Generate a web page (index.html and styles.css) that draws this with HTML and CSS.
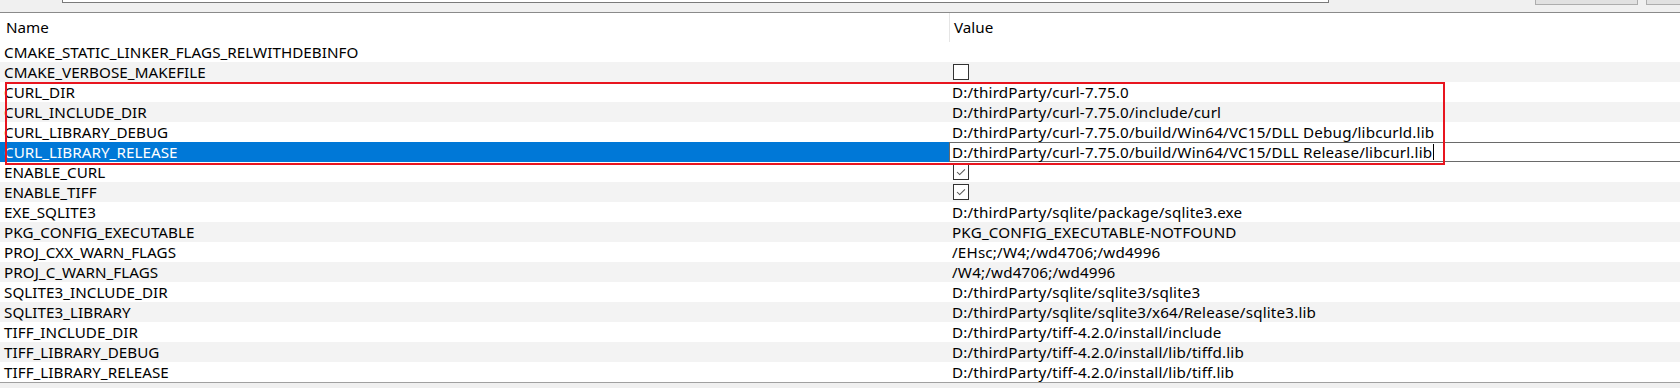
FILE: index.html
```html
<!DOCTYPE html>
<html lang="en">
<head>
  <meta charset="UTF-8" />
  <title>CMake cache</title>
  <link rel="stylesheet" href="styles.css">
</head>
<body>

  <!-- top strip: search box and buttons, mostly cut off -->
  <div class="toolbar">
    <div class="search"></div>
    <div class="tool-btn"></div>
    <div class="tool-btn tool-btn-last"></div>
  </div>

  <div class="cache">
    <div class="cache-head">
      <div class="head-name">Name</div>
      <div class="head-value">Value</div>
    </div>

    <div class="cache-rows">
      <div class="row"><div class="name">CMAKE_STATIC_LINKER_FLAGS_RELWITHDEBINFO</div><div class="value"></div></div>
      <div class="row"><div class="name">CMAKE_VERBOSE_MAKEFILE</div><div class="value"><span class="check"></span></div></div>
      <div class="row"><div class="name">CURL_DIR</div><div class="value">D:/thirdParty/curl-7.75.0</div></div>
      <div class="row"><div class="name">CURL_INCLUDE_DIR</div><div class="value">D:/thirdParty/curl-7.75.0/include/curl</div></div>
      <div class="row"><div class="name">CURL_LIBRARY_DEBUG</div><div class="value">D:/thirdParty/curl-7.75.0/build/Win64/VC15/DLL Debug/libcurld.lib</div></div>
      <div class="row selected"><div class="name">CURL_LIBRARY_RELEASE</div><div class="value editor"><span class="caret">D:/thirdParty/curl-7.75.0/build/Win64/VC15/DLL Release/libcurl.lib</span></div></div>
      <div class="row"><div class="name">ENABLE_CURL</div><div class="value"><span class="check"><svg viewBox="0 0 16 16" width="14" height="14"><polyline points="3.5,8 6.5,11 12.5,5" fill="none" stroke="#555" stroke-width="1.2"/></svg></span></div></div>
      <div class="row"><div class="name">ENABLE_TIFF</div><div class="value"><span class="check"><svg viewBox="0 0 16 16" width="14" height="14"><polyline points="3.5,8 6.5,11 12.5,5" fill="none" stroke="#555" stroke-width="1.2"/></svg></span></div></div>
      <div class="row"><div class="name">EXE_SQLITE3</div><div class="value">D:/thirdParty/sqlite/package/sqlite3.exe</div></div>
      <div class="row"><div class="name">PKG_CONFIG_EXECUTABLE</div><div class="value">PKG_CONFIG_EXECUTABLE-NOTFOUND</div></div>
      <div class="row"><div class="name">PROJ_CXX_WARN_FLAGS</div><div class="value">/EHsc;/W4;/wd4706;/wd4996</div></div>
      <div class="row"><div class="name">PROJ_C_WARN_FLAGS</div><div class="value">/W4;/wd4706;/wd4996</div></div>
      <div class="row"><div class="name">SQLITE3_INCLUDE_DIR</div><div class="value">D:/thirdParty/sqlite/sqlite3/sqlite3</div></div>
      <div class="row"><div class="name">SQLITE3_LIBRARY</div><div class="value">D:/thirdParty/sqlite/sqlite3/x64/Release/sqlite3.lib</div></div>
      <div class="row"><div class="name">TIFF_INCLUDE_DIR</div><div class="value">D:/thirdParty/tiff-4.2.0/install/include</div></div>
      <div class="row"><div class="name">TIFF_LIBRARY_DEBUG</div><div class="value">D:/thirdParty/tiff-4.2.0/install/lib/tiffd.lib</div></div>
      <div class="row"><div class="name">TIFF_LIBRARY_RELEASE</div><div class="value">D:/thirdParty/tiff-4.2.0/install/lib/tiff.lib</div></div>

      <!-- red annotation box around the CURL entries -->
      <div class="mark"></div>
    </div>
  </div>

</body>
</html>
```

FILE: styles.css
```css
body {
  margin: 0;
  height: 388px;
  overflow: hidden;
  background-color: #f0f0f0;
  font-family: 'Noto Sans', 'Liberation Sans', sans-serif;
  font-size: 15.2px;
  color: #000;
}

.toolbar {
  display: flex;
  align-items: flex-start;
  height: 12px;
  overflow: hidden;
}

.search {
  margin-left: 62px;
  width: 1267px;
  height: 3px;
  flex-shrink: 0;
  box-sizing: border-box;
  background-color: #fff;
  border: 1px solid #7a7a7a;
  border-top: none;
}

.tool-btn {
  margin-left: 206px;
  width: 103px;
  height: 5px;
  flex-shrink: 0;
  box-sizing: border-box;
  background-color: #e1e1e1;
  border: 1px solid #adadad;
  border-top: none;
}

.tool-btn-last {
  margin-left: 8px;
  width: 60px;
}

.cache {
  background-color: #fff;
  border-top: 1px solid #8a8a8a;
  border-bottom: 1px solid #a0a0a0;
}

.cache-head {
  display: grid;
  grid-template-columns: 949px 1fr;
  height: 29px;
  line-height: 29px;
}

.head-name {
  padding-left: 6px;
}

.head-value {
  padding-left: 4px;
  border-left: 1px solid #e5e5e5;
}

.cache-rows {
  position: relative;
}

.row {
  display: grid;
  grid-template-columns: 949px 1fr;
  height: 20px;
  line-height: 20px;
  white-space: nowrap;
}

.row:nth-child(even) {
  background-color: #f3f3f3;
}

.name {
  padding-left: 4px;
  letter-spacing: 0.05px;
}

.value {
  padding-left: 3px;
  display: flex;
  align-items: center;
  letter-spacing: 0.18px;
}

.selected .name {
  background-color: #0078d7;
  color: #fff;
}

.editor {
  background-color: #fff;
  box-sizing: border-box;
  height: 20px;
  border-top: 1px solid #6a6a6a;
  border-bottom: 1px solid #6a6a6a;
  border-left: 1px solid #6a6a6a;
  padding-left: 2px;
}

.caret {
  border-right: 1px solid #000;
  line-height: 16px;
  padding-right: 1px;
}

.check {
  display: inline-flex;
  align-items: center;
  justify-content: center;
  width: 16px;
  height: 16px;
  margin-left: 1px;
  box-sizing: border-box;
  border: 1px solid #333;
  background-color: #fff;
}

.mark {
  position: absolute;
  left: 5px;
  top: 40px;
  width: 1440px;
  height: 83px;
  box-sizing: border-box;
  border: 2px solid #e8151f;
}
```
